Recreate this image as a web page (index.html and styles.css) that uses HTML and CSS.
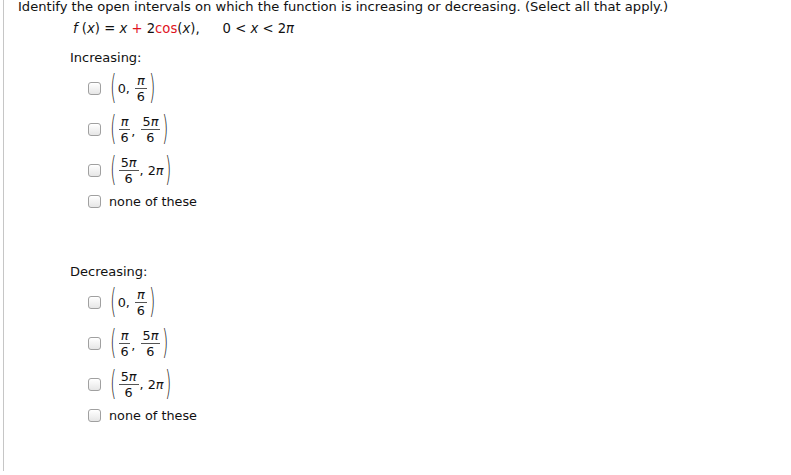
FILE: index.html
```html
<!DOCTYPE html>
<html>
<head>
<meta charset="utf-8">
<link rel="stylesheet" href="styles.css">
</head>
<body>
<div class="frame">
  <p class="title">Identify the open intervals on which the function is increasing or decreasing. (Select all that apply.)</p>
  <p class="formula"><i>f</i> (<i>x</i>) = <i>x</i> <span class="red">+</span> 2<span class="red">cos</span>(<i>x</i>),<span class="sp"></span>0 &lt; <i>x</i> &lt; 2<i>π</i></p>

  <section class="group">
    <div class="label">Increasing:</div>
    <div class="opt"><span class="cb"></span><span class="paren">(</span><span class="txt">0,&nbsp;</span><span class="frac"><span class="num"><i>π</i></span><span class="den">6</span></span><span class="paren">)</span></div>
    <div class="opt"><span class="cb"></span><span class="paren">(</span><span class="frac"><span class="num"><i>π</i></span><span class="den">6</span></span><span class="txt comma">,&nbsp;</span><span class="frac"><span class="num">5<i>π</i></span><span class="den">6</span></span><span class="paren">)</span></div>
    <div class="opt"><span class="cb"></span><span class="paren">(</span><span class="frac"><span class="num">5<i>π</i></span><span class="den">6</span></span><span class="txt">,&nbsp;2<i>π</i></span><span class="paren">)</span></div>
    <div class="opt none"><span class="cb"></span><span class="txt">none of these</span></div>
  </section>

  <section class="group dec">
    <div class="label">Decreasing:</div>
    <div class="opt"><span class="cb"></span><span class="paren">(</span><span class="txt">0,&nbsp;</span><span class="frac"><span class="num"><i>π</i></span><span class="den">6</span></span><span class="paren">)</span></div>
    <div class="opt"><span class="cb"></span><span class="paren">(</span><span class="frac"><span class="num"><i>π</i></span><span class="den">6</span></span><span class="txt comma">,&nbsp;</span><span class="frac"><span class="num">5<i>π</i></span><span class="den">6</span></span><span class="paren">)</span></div>
    <div class="opt"><span class="cb"></span><span class="paren">(</span><span class="frac"><span class="num">5<i>π</i></span><span class="den">6</span></span><span class="txt">,&nbsp;2<i>π</i></span><span class="paren">)</span></div>
    <div class="opt none"><span class="cb"></span><span class="txt">none of these</span></div>
  </section>
</div>
</body>
</html>
```

FILE: styles.css
```css
html, body {
  margin: 0;
  padding: 0;
  background: #fff;
}
body {
  font-family: "DejaVu Sans", Verdana, sans-serif;
  font-size: 13px;
  color: #111;
  overflow: hidden;
}
.frame {
  margin-left: 3px;
  border-left: 1px solid #c6c6c6;
  height: 473px;
  padding-left: 14px;
  box-sizing: border-box;
}
.title {
  margin: 0;
  margin-top: -2px;
  line-height: 17px;
  white-space: nowrap;
  font-size: 13.1px;
}
.formula {
  margin: 5px 0 0 55px;
  line-height: 17px;
  font-size: 13.2px;
}
.formula i { font-style: italic; }
.red { color: #e0141e; }
.sp { display: inline-block; width: 23px; }
.group {
  margin-left: 52px;
  margin-top: 12px;
  display: flex;
  flex-direction: column;
}
.group.dec { margin-top: 53px; }
.label {
  line-height: 17px;
  font-size: 13px;
  margin-bottom: 7px;
}
.opt {
  display: flex;
  align-items: center;
  margin-left: 18px;
  height: 30px;
  margin-bottom: 11px;
}
.opt.none {
  height: 17px;
  margin-bottom: 0;
  margin-top: -3px;
}
.cb {
  width: 11px;
  height: 11px;
  border: 1px solid #a0a0a0;
  border-radius: 3px;
  background: linear-gradient(#ffffff, #e6e6e6);
  box-shadow: inset 0 1px 1px rgba(255,255,255,0.8);
  margin-right: 8px;
  flex: none;
}
.paren {
  display: inline-block;
  font-size: 17px;
  font-weight: 200;
  transform: scale(0.9, 1.95);
  line-height: 17px;
  margin: 0 1px;
  color: #222;
}
.txt {
  font-size: 12.8px;
  white-space: nowrap;
}
.comma { margin-top: 4px; }
.frac {
  display: inline-flex;
  flex-direction: column;
  align-items: center;
  font-size: 12.8px;
  line-height: 13px;
  margin: 0 1px;
}
.frac i { font-style: italic; }
.num {
  padding: 0 2px 1px;
}
.den {
  border-top: 1px solid #555;
  align-self: stretch;
  text-align: center;
  padding-top: 1px;
}
```
